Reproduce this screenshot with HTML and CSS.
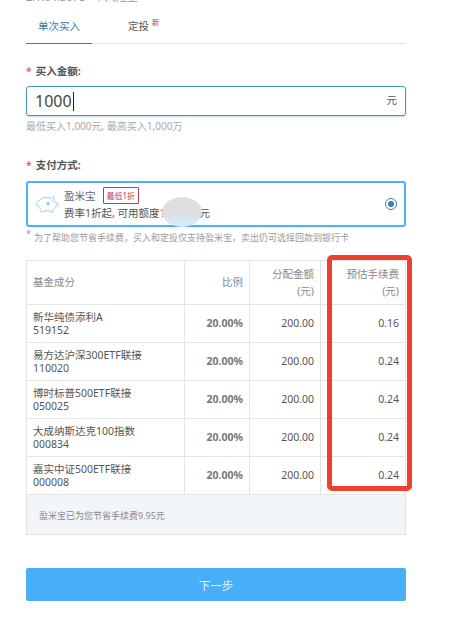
FILE: index.html
```html
<!DOCTYPE html>
<html lang="zh-CN">
<head>
    <meta charset="UTF-8">
    <meta name="viewport" content="width=device-width, initial-scale=1.0">
    <title>单次买入</title>
    <link rel="stylesheet" href="styles.css">
</head>
<body>
    <div class="page">
        <div class="crumb"><span>2.1.04.5078 · 个风险型</span></div>

        <div class="tabs">
            <div class="tab active">单次买入</div>
            <div class="tab">定投<span class="new">新</span></div>
        </div>

        <div class="label"><span class="star">*</span>买入金额:</div>
        <div class="amount">
            <span class="value">1000</span><span class="caret"></span>
            <span class="unit">元</span>
        </div>
        <p class="hint">最低买入1,000元, 最高买入1,000万</p>

        <div class="label pay-label"><span class="star">*</span>支付方式:</div>
        <div class="pay">
            <svg class="pig" viewBox="0 0 24 18" width="24" height="18" fill="none" stroke="#8ccdf5" stroke-width="0.9">
                <path d="M4.5 5.5 C6 3.2 9 2.4 12 2.4 C13.6 2.4 15 2.7 16.2 3.4 L19.2 1.6 L18.9 5 C19.8 6 20.3 6.8 20.5 7.6 L22.6 8 L22.6 11 L20.6 11.4 C20 13 19 14 18 14.7 L18 17 L15 17 L14.6 15.7 L9.6 15.7 L9.2 17 L6.2 17 L6 14.6 C4.6 13.6 3.8 12.4 3.6 11 L1.2 10 C1 8.6 1.6 7 3 6.2 Z"/>
                <circle cx="13" cy="8.6" r="1.4" fill="#8ccdf5"/>
                <path d="M16.5 6.4 L17.8 6.4"/>
            </svg>
            <div class="pay-text">
                <div class="pay-name">盈米宝<span class="tag">最低1折</span></div>
                <div class="pay-rate">费率1折起, 可用额度1<span class="gap"></span>元</div>
            </div>
            <span class="radio"></span>
            <span class="smudge"></span>
        </div>
        <p class="note"><sup>*</sup>为了帮助您节省手续费，买入和定投仅支持盈米宝，卖出仍可选择回款到银行卡</p>

        <div class="fees">
            <table>
                <thead>
                    <tr>
                        <th class="name">基金成分</th>
                        <th>比例</th>
                        <th>分配金额<br>(元)</th>
                        <th>预估手续费<br>(元)</th>
                    </tr>
                </thead>
                <tbody>
                    <tr><td class="name">新华纯债添利A<br>519152</td><td class="pct">20.00%</td><td>200.00</td><td>0.16</td></tr>
                    <tr><td class="name">易方达沪深300ETF联接<br>110020</td><td class="pct">20.00%</td><td>200.00</td><td>0.24</td></tr>
                    <tr><td class="name">博时标普500ETF联接<br>050025</td><td class="pct">20.00%</td><td>200.00</td><td>0.24</td></tr>
                    <tr><td class="name">大成纳斯达克100指数<br>000834</td><td class="pct">20.00%</td><td>200.00</td><td>0.24</td></tr>
                    <tr><td class="name">嘉实中证500ETF联接<br>000008</td><td class="pct">20.00%</td><td>200.00</td><td>0.24</td></tr>
                </tbody>
            </table>
            <div class="saved">盈米宝已为您节省手续费9.95元</div>
            <div class="marker"></div>
        </div>

        <button class="next">下一步</button>
    </div>
</body>
</html>
```

FILE: styles.css
```css
body {
    margin: 0;
    background: #fff;
    font-family: "Noto Sans", "Noto Sans CJK SC", sans-serif;
    color: #555;
    font-size: 12px;
}
.page {
    width: 380px;
    margin-left: 26px;
}
.crumb {
    height: 3px;
    overflow: hidden;
    color: #999;
    font-size: 11px;
}
.crumb span {
    display: block;
    margin-top: -11px;
    line-height: 16px;
}
.tabs {
    display: flex;
    height: 40px;
    border-bottom: 1px solid #e4e4e4;
}
.tab {
    width: 66px;
    height: 40px;
    line-height: 47px;
    text-align: center;
    font-size: 10.5px;
    color: #555;
    position: relative;
}
.tab.active {
    color: #337ab7;
    border-bottom: 1px solid #337ab7;
}
.tab + .tab {
    margin-left: 19px;
    width: 55px;
}
.new {
    position: absolute;
    left: 41px;
    top: 16px;
    font-size: 7px;
    line-height: 7px;
    color: #c9302c;
}
.label {
    margin-top: 19px;
    height: 16px;
    line-height: 16px;
    font-size: 10.5px;
    font-weight: 700;
    color: #555;
}
.star {
    color: #f0625a;
    margin-right: 4px;
}
.amount {
    margin-top: 7px;
    height: 30px;
    box-sizing: border-box;
    border: 1px solid #4596bd;
    border-radius: 3px;
    box-shadow: 0 1px 2px rgba(69, 150, 189, 0.35);
    display: flex;
    align-items: center;
    padding: 0 8px;
}
.value {
    font-size: 16px;
    color: #444;
}
.caret {
    width: 1px;
    height: 19px;
    background: #222;
    margin-left: 1px;
}
.unit {
    margin-left: auto;
    font-size: 10.5px;
    margin-top: -3px;
}
.hint {
    margin: 2px 0 0;
    height: 16px;
    line-height: 16px;
    font-size: 10px;
    color: #aaa;
}
.pay-label {
    margin-top: 23px;
}
.pay {
    margin-top: 8px;
    height: 46px;
    box-sizing: border-box;
    border: 2px solid #4bb0f7;
    border-radius: 3px;
    display: flex;
    align-items: center;
    padding: 0 7px;
    position: relative;
}
.pig {
    flex: none;
}
.pay-text {
    margin-left: 5px;
    font-size: 10.5px;
    line-height: 17px;
    padding-top: 2px;
}
.pay-name {
    display: flex;
    align-items: center;
    color: #666;
}
.tag {
    margin-left: 7px;
    margin-top: -2px;
    border: 1px solid #c23a45;
    border-radius: 1px;
    color: #c23a45;
    font-size: 8px;
    line-height: 15px;
    padding: 0 3px;
}
.gap {
    display: inline-block;
    width: 34px;
}
.radio {
    margin-left: auto;
    width: 12px;
    height: 12px;
    box-sizing: border-box;
    border: 1.5px solid #3f84ad;
    border-radius: 50%;
    background: radial-gradient(circle, #3f84ad 0 2.8px, #fff 3.2px);
}
.smudge {
    position: absolute;
    left: 134px;
    top: 14px;
    width: 40px;
    height: 30px;
    border-radius: 50%;
    background: linear-gradient(#dedede 0 60%, #d5e8f4 75%);
}
.note {
    margin: 3px 0 0;
    height: 16px;
    line-height: 16px;
    font-size: 9px;
    color: #999;
    white-space: nowrap;
}
.note sup {
    font-size: 9px;
    line-height: 0;
    margin-right: 3px;
}
.fees {
    position: relative;
    margin-top: 14px;
    height: 275px;
}
table {
    width: 380px;
    border-collapse: collapse;
    table-layout: fixed;
    font-size: 10.5px;
}
th, td {
    border: 1px solid #e4e4e4;
    padding: 0 6px;
    text-align: right;
    line-height: 13px;
    height: 37px;
}
th {
    height: 43px;
    font-weight: 400;
    color: #888;
    line-height: 17px;
}
th:nth-child(1), td:nth-child(1) { width: 145px; }
th:nth-child(2), td:nth-child(2) { width: 52px; }
th:nth-child(3), td:nth-child(3) { width: 58px; }
.name {
    text-align: left;
    color: #555;
}
th.name {
    color: #888;
}
.pct {
    font-weight: 700;
    color: #777;
}
.saved {
    height: 40px;
    width: 380px;
    box-sizing: border-box;
    background: #f2f5fa;
    border: 1px solid #e0e0e0;
    border-top: none;
    padding-left: 12px;
    line-height: 41px;
    font-size: 9px;
    color: #888;
}
.marker {
    position: absolute;
    left: 301px;
    top: -5px;
    width: 85px;
    height: 236px;
    box-sizing: border-box;
    border: 5px solid #f0402b;
    border-radius: 5px;
}
.next {
    display: block;
    margin-top: 33px;
    width: 380px;
    height: 33px;
    border: none;
    border-radius: 2px;
    background: #47aef8;
    font: inherit;
    font-size: 11.5px;
    color: #e8f5ff;
}
```
